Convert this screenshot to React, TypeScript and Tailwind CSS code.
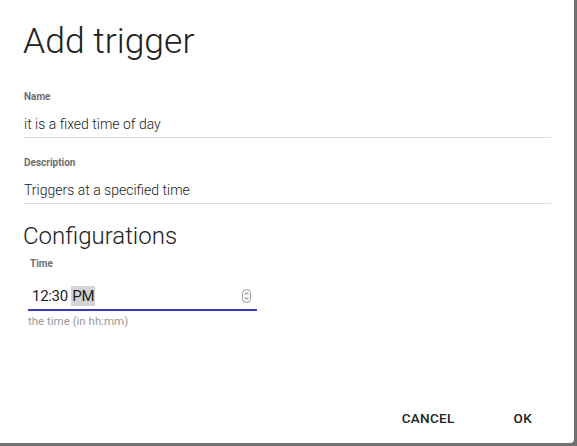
const FIELDS = [
  { label: "Name", value: "it is a fixed time of day" },
  { label: "Description", value: "Triggers at a specified time" },
];

function SpinIcon() {
  return (
    <svg width="9" height="14" viewBox="0 0 9 14" fill="none">
      <rect x="0.5" y="0.5" width="8" height="13" rx="4" stroke="#9a9a9a" />
      <path d="M2.8 5.6 4.5 3.9 6.2 5.6" stroke="#555" strokeWidth="1" />
      <path d="M2.8 8.4 4.5 10.1 6.2 8.4" stroke="#555" strokeWidth="1" />
    </svg>
  );
}

export default function App() {
  return (
    <div className="w-[577px] h-[446px] bg-[#6f6f6f] overflow-hidden font-['Roboto',sans-serif]">
      <div className="w-[574px] h-[443px] bg-white rounded-br-[4px] flex flex-col">
        <h1 className="mt-[21px] ml-[23px] text-[35.5px] leading-[40px] font-light text-[#212121]">
          Add trigger
        </h1>

        <div className="mt-[28px] ml-6 mr-[23px] flex flex-col">
          {FIELDS.map((f, i) => (
            <div key={f.label} className={i > 0 ? "mt-[17px]" : ""}>
              <div className="text-[10px] leading-4 font-bold text-[#6e6e6e]">
                {f.label}
              </div>
              <div className="mt-[9px] pb-[3px] text-[14px] leading-5 font-light text-[#1a1a1a] border-b border-[#dcdcdc]">
                {f.value}
              </div>
            </div>
          ))}
        </div>

        <h2 className="mt-[16px] ml-[23px] text-[24px] leading-8 font-light text-[#212121]">
          Configurations
        </h2>

        <div className="ml-[30px] mt-[4px] text-[10px] leading-4 font-bold text-[#6e6e6e]">
          Time
        </div>
        <div className="ml-[28px] w-[229px] mt-[14px]">
          <div className="flex items-center justify-between pl-1 pr-[6px] pb-[3px] border-b-2 border-[#3e3cb0]">
            <span className="text-[15px] leading-5 tracking-[-0.3px] text-[#222]">
              12:30 <span className="bg-[#d4d4d4] px-[1px] py-[1px]">PM</span>
            </span>
            <SpinIcon />
          </div>
          <div className="mt-[2px] text-[11.5px] leading-4 text-[#9a9a9a]">
            the time (in hh:mm)
          </div>
        </div>

        <div className="mt-auto mb-[17px] mr-[42px] flex justify-end gap-[59px] text-[13.5px] leading-4 font-medium text-[#222]">
          <button className="tracking-[0.3px]">CANCEL</button>
          <button className="tracking-[0.3px]">OK</button>
        </div>
      </div>
    </div>
  );
}
